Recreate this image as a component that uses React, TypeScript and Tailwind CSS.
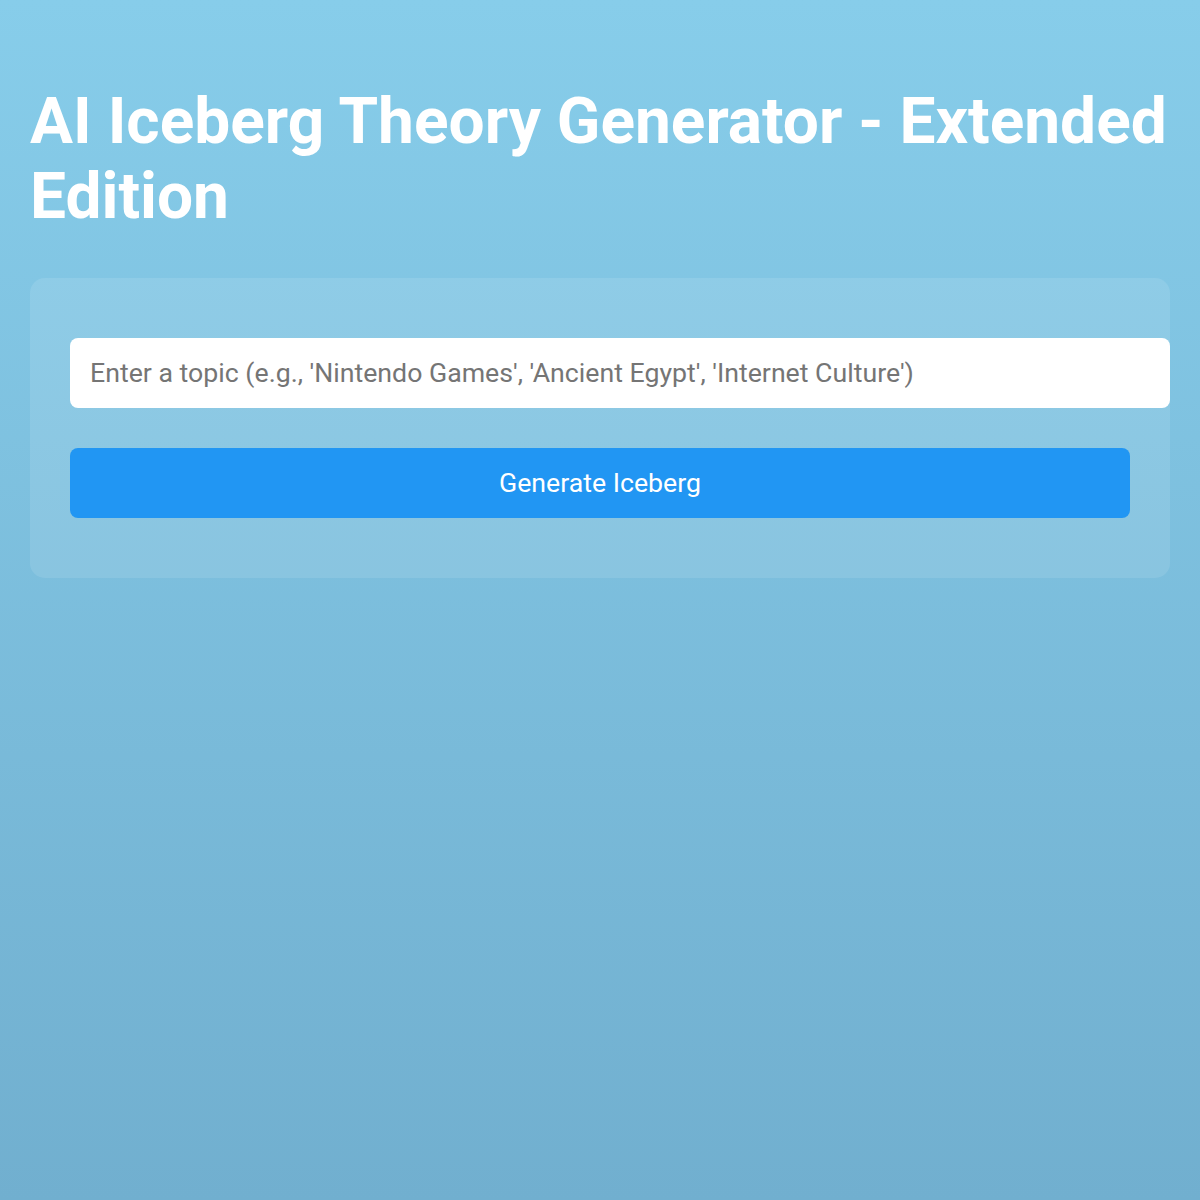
export default function App() {
  return (
    <div className="min-h-[1200px] bg-gradient-to-b from-[#87cdea] to-[#71afcf] px-[30px] pt-[84px] font-['Roboto',sans-serif]">
      <h1 className="text-[64px] font-bold leading-[75px] text-white">
        AI Iceberg Theory Generator - Extended Edition
      </h1>
      <div className="mt-[44px] h-[300px] rounded-[15px] bg-white/10 px-[40px] py-[60px]">
        <input
          type="text"
          placeholder="Enter a topic (e.g., 'Nintendo Games', 'Ancient Egypt', 'Internet Culture')"
          className="block h-[70px] w-[1100px] rounded-[8px] bg-white px-[20px] text-[26.7px] text-[#333] outline-none placeholder:text-[#757575]"
        />
        <button className="mt-[40px] block h-[70px] w-full rounded-[8px] bg-[#2196f3] text-[26.7px] text-white">
          Generate Iceberg
        </button>
      </div>
    </div>
  );
}
